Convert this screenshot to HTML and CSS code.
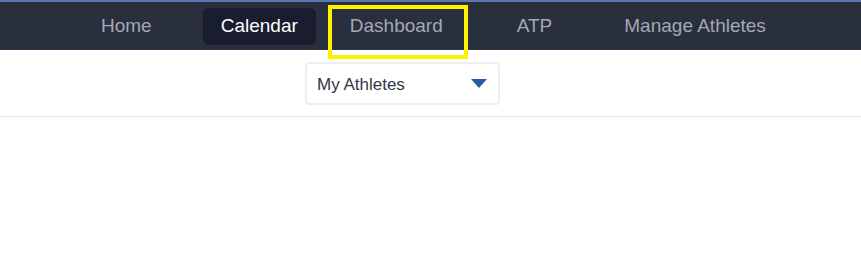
FILE: index.html
```html
<!DOCTYPE html>
<html>
<head>
<meta charset="utf-8">
<link rel="stylesheet" href="styles.css">
</head>
<body>
<header class="topbar">
  <nav class="nav">
    <a class="nav-item">Home</a>
    <a class="nav-item active">Calendar</a>
    <a class="nav-item dash">Dashboard</a>
    <a class="nav-item atp">ATP</a>
    <a class="nav-item manage">Manage Athletes</a>
    <span class="highlight"></span>
  </nav>
</header>
<section class="filter">
  <div class="select">
    <span class="select-label">My Athletes</span>
    <span class="caret"></span>
  </div>
</section>
</body>
</html>
```
FILE: styles.css
```css
* { box-sizing: border-box; }
html, body { margin: 0; padding: 0; background: #fff; }
body { font-family: "Liberation Sans", Arial, sans-serif; width: 861px; height: 254px; overflow: hidden; }
.topbar {
  height: 50px;
  background: #2a2f3e;
  border-top: 2px solid #5a79b0;
}
.nav {
  position: relative;
  display: flex;
  align-items: center;
  height: 48px;
  padding-left: 83px;
}
.nav-item {
  display: flex;
  align-items: center;
  height: 37px;
  padding: 0 18px;
  font-size: 19px;
  color: #a2a8b4;
  border-radius: 6px;
  white-space: nowrap;
}
.nav-item + .nav-item { margin-left: 33px; }
.nav-item.active { background: #191d2e; color: #fff; }
.nav-item.dash { margin-left: 16px; }
.nav-item.atp { margin-left: 38px; }
.nav-item.manage { margin-left: 36px; }
.highlight {
  position: absolute;
  left: 328px;
  top: 3px;
  width: 140px;
  height: 54px;
  border: 4px solid #fff200;
}
.filter {
  height: 67px;
  border-bottom: 1px solid #e2e1ea;
  padding: 12px 0 0 305px;
}
.select {
  width: 195px;
  height: 43px;
  border: 2px solid #eeeef2;
  border-radius: 4px;
  display: flex;
  align-items: center;
  justify-content: space-between;
  padding: 0 11px 0 10px;
}
.select-label { font-size: 17px; color: #333744; margin-top: 3px; }
.caret {
  width: 0; height: 0;
  border-left: 8px solid transparent;
  border-right: 8px solid transparent;
  border-top: 9px solid #2b5a9e;
}
```
